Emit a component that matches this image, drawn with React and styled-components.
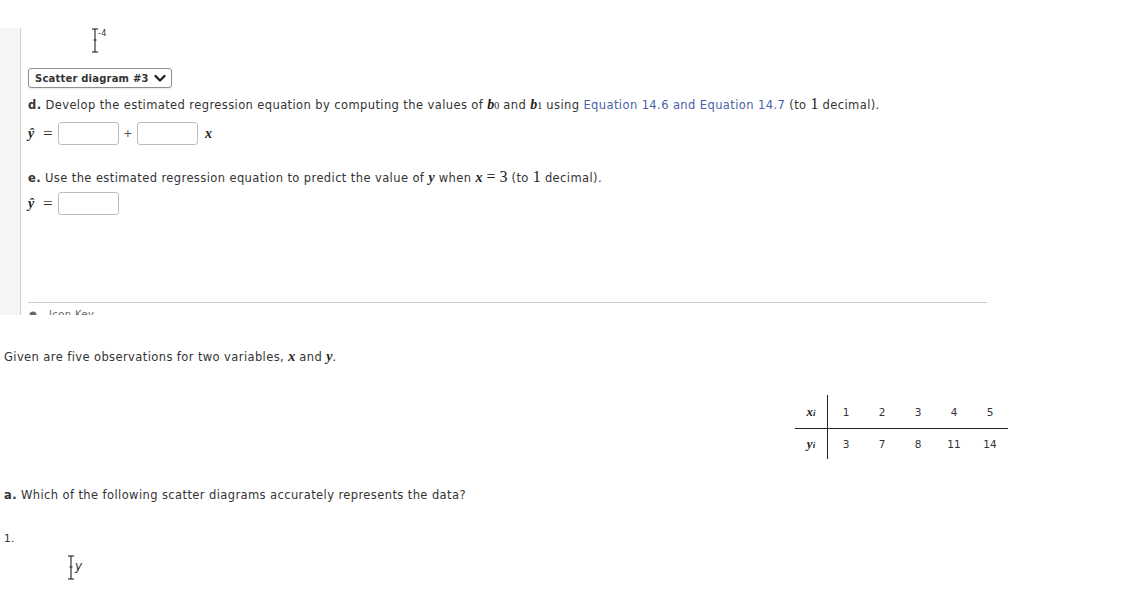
import React from "react";
import styled, { createGlobalStyle } from "styled-components";

const Global = createGlobalStyle`
  html, body { margin: 0; padding: 0; background: #fff; }
  body {
    font-family: "DejaVu Sans", Verdana, sans-serif;
    font-size: 11.5px;
    letter-spacing: 0.4px;
    color: #333;
  }
`;

const Page = styled.div`
  width: 1132px;
  height: 616px;
  overflow: hidden;
  background: #fff;
  padding-top: 28px;
  box-sizing: border-box;
`;

const Panel = styled.section`
  display: flex;
  height: 287px;
  overflow: hidden;
`;

const Strip = styled.div`
  width: 20px;
  flex: none;
  background: #f5f5f5;
  border-right: 1px solid #cfcfcf;
`;

const PanelBody = styled.div`
  width: 959px;
  padding-left: 7px;
  display: flex;
  flex-direction: column;
  align-items: flex-start;
  & > * { flex-shrink: 0; }
`;

const AxisStub = styled.svg`
  display: block;
  flex-shrink: 0;
  margin-left: ${(p) => p.$offset}px;
  margin-top: ${(p) => p.$top || 0}px;
  overflow: visible;
`;

const Select = styled.div`
  display: flex;
  align-items: center;
  justify-content: space-between;
  box-sizing: border-box;
  width: 144px;
  height: 20px;
  margin-top: 14px;
  padding: 0 5px 0 6px;
  border: 1px solid #8f8f8f;
  border-radius: 3px;
  background: #fff;
  box-shadow: 0 1px 1px rgba(0, 0, 0, 0.08);
  font-size: 10px;
  letter-spacing: 0.2px;
  font-weight: bold;
  color: #333;
`;

const Prompt = styled.p`
  margin: ${(p) => p.$top}px 0 0;
  line-height: 16px;
  white-space: nowrap;
`;

const Label = styled.b`
  font-weight: bold;
`;

const Math = styled.span`
  font-family: "Liberation Serif", "DejaVu Serif", serif;
  font-style: ${(p) => (p.$upright ? "normal" : "italic")};
  font-weight: ${(p) => (p.$upright ? "normal" : "bold")};
  font-size: ${(p) => p.$size || 14}px;
  letter-spacing: 0;
  color: #222;
`;

const Link = styled.span`
  color: #4a62a8;
`;

const AnswerRow = styled.div`
  display: flex;
  align-items: center;
  margin-top: ${(p) => p.$top}px;
  height: 23px;
`;

const Hat = styled.span`
  font-family: "Liberation Serif", "DejaVu Serif", serif;
  font-style: italic;
  font-weight: bold;
  font-size: 14px;
  color: #222;
  width: 10px;
`;

const Eq = styled.span`
  font-family: "Liberation Serif", serif;
  font-size: 17px;
  color: #333;
  width: 20px;
  text-align: center;
`;

const Blank = styled.span`
  display: block;
  box-sizing: border-box;
  width: 61px;
  height: 23px;
  border: 1px solid #bdbdbd;
  border-radius: 3px;
  background: #fff;
`;

const Plus = styled.span`
  width: 18px;
  text-align: center;
  font-size: 11px;
  color: #555;
`;

const VarX = styled.span`
  margin-left: 7px;
  font-family: "Liberation Serif", serif;
  font-style: italic;
  font-weight: bold;
  font-size: 14px;
  color: #222;
`;

const Rule = styled.div`
  align-self: stretch;
  margin-top: ${(p) => p.$top}px;
  border-top: 1px solid #cccccc;
`;

const IconKey = styled.div`
  display: flex;
  align-items: center;
  gap: 12px;
  margin-top: 6px;
  padding-left: 1px;
  font-size: 10px;
  color: #666;
`;

const Question = styled.section`
  padding-left: 4px;
  display: flex;
  flex-direction: column;
  align-items: flex-start;
`;

const TableWrap = styled.div`
  align-self: stretch;
  margin-top: 30px;
  padding-left: 791px;
`;

const DataTable = styled.table`
  border-collapse: collapse;
  font-size: 10.5px;
  letter-spacing: 0;
  color: #333;
`;

const Cell = styled.td`
  width: ${(p) => (p.$head ? 32 : 36)}px;
  padding: 0;
  height: ${(p) => p.$h}px;
  text-align: center;
  vertical-align: middle;
  border-right: ${(p) => (p.$head ? "1px solid #222" : "none")};
  border-bottom: ${(p) => (p.$line ? "1px solid #222" : "none")};
`;

const Sub = styled.span`
  font-family: "Liberation Serif", serif;
  font-style: italic;
  font-weight: bold;
  font-size: ${(p) => (p.$small ? 9 : 13)}px;
  color: #222;
`;

const Choice = styled.div`
  margin-top: ${(p) => p.$top}px;
  line-height: 16px;
  font-size: 10.5px;
`;

const ChevronIcon = () => (
  <svg width="12" height="9" viewBox="0 0 12 9">
    <path d="M1.5 2 L6 6.5 L10.5 2" fill="none" stroke="#222" strokeWidth="2.4" strokeLinecap="round" strokeLinejoin="round" />
  </svg>
);

const xs = [1, 2, 3, 4, 5];
const ys = [3, 7, 8, 11, 14];

export default function App() {
  return (
    <Page>
      <Global />
      <Panel>
        <Strip />
        <PanelBody>
          <AxisStub $offset={61} width="22" height="26" viewBox="0 0 22 26">
            <line x1="6" y1="1" x2="6" y2="24" stroke="#333" strokeWidth="1.2" />
            <line x1="3" y1="1" x2="9" y2="1" stroke="#333" strokeWidth="1.2" />
            <line x1="3" y1="24" x2="9" y2="24" stroke="#333" strokeWidth="1.2" />
            <line x1="4.5" y1="12" x2="7.5" y2="12" stroke="#333" strokeWidth="1.2" />
            <text x="9" y="8" fontSize="8" fontFamily="DejaVu Sans, sans-serif" fill="#333">-4</text>
          </AxisStub>
          <Select>
            <span>Scatter diagram #3</span>
            <ChevronIcon />
          </Select>
          <Prompt $top={8}>
            <Label>d.</Label> Develop the estimated regression equation by computing the values of{" "}
            <Math>b</Math><Math $upright $size={10}>0</Math> and{" "}
            <Math>b</Math><Math $upright $size={10}>1</Math> using{" "}
            <Link>Equation 14.6 and Equation 14.7</Link> (to <Math $upright $size={16}>1</Math> decimal).
          </Prompt>
          <AnswerRow $top={8}>
            <Hat>ŷ</Hat>
            <Eq>=</Eq>
            <Blank />
            <Plus>+</Plus>
            <Blank />
            <VarX>x</VarX>
          </AnswerRow>
          <Prompt $top={24}>
            <Label>e.</Label> Use the estimated regression equation to predict the value of{" "}
            <Math>y</Math> when <Math>x</Math> <Math $upright $size={16}>= 3</Math> (to{" "}
            <Math $upright $size={16}>1</Math> decimal).
          </Prompt>
          <AnswerRow $top={6}>
            <Hat>ŷ</Hat>
            <Eq>=</Eq>
            <Blank />
          </AnswerRow>
          <Rule $top={87} />
          <IconKey>
            <svg width="8" height="8" viewBox="0 0 8 8"><circle cx="4" cy="4" r="3.5" fill="#666" /></svg>
            <span>Icon Key</span>
          </IconKey>
        </PanelBody>
      </Panel>
      <Question>
        <Prompt $top={34}>
          Given are five observations for two variables, <Math>x</Math> and <Math>y</Math>.
        </Prompt>
        <TableWrap>
          <DataTable>
            <tbody>
              <tr>
                <Cell $head $line $h={33}><Sub>x</Sub><Sub $small>i</Sub></Cell>
                {xs.map((v) => (
                  <Cell key={v} $line $h={33}>{v}</Cell>
                ))}
              </tr>
              <tr>
                <Cell $head $h={30}><Sub>y</Sub><Sub $small>i</Sub></Cell>
                {ys.map((v) => (
                  <Cell key={v} $h={30}>{v}</Cell>
                ))}
              </tr>
            </tbody>
          </DataTable>
        </TableWrap>
        <Prompt $top={28}>
          <Label>a.</Label> Which of the following scatter diagrams accurately represents the data?
        </Prompt>
        <Choice $top={27}>1.</Choice>
        <AxisStub $offset={62} $top={9} width="20" height="26" viewBox="0 0 20 26">
          <line x1="5" y1="1" x2="5" y2="24" stroke="#333" strokeWidth="1.2" />
          <line x1="2" y1="1" x2="8" y2="1" stroke="#333" strokeWidth="1.2" />
          <line x1="2" y1="24" x2="8" y2="24" stroke="#333" strokeWidth="1.2" />
          <line x1="3.5" y1="12" x2="6.5" y2="12" stroke="#333" strokeWidth="1.2" />
          <text x="9" y="15" fontSize="12" fontStyle="italic" fontFamily="DejaVu Sans, sans-serif" fill="#333">y</text>
        </AxisStub>
      </Question>
    </Page>
  );
}
